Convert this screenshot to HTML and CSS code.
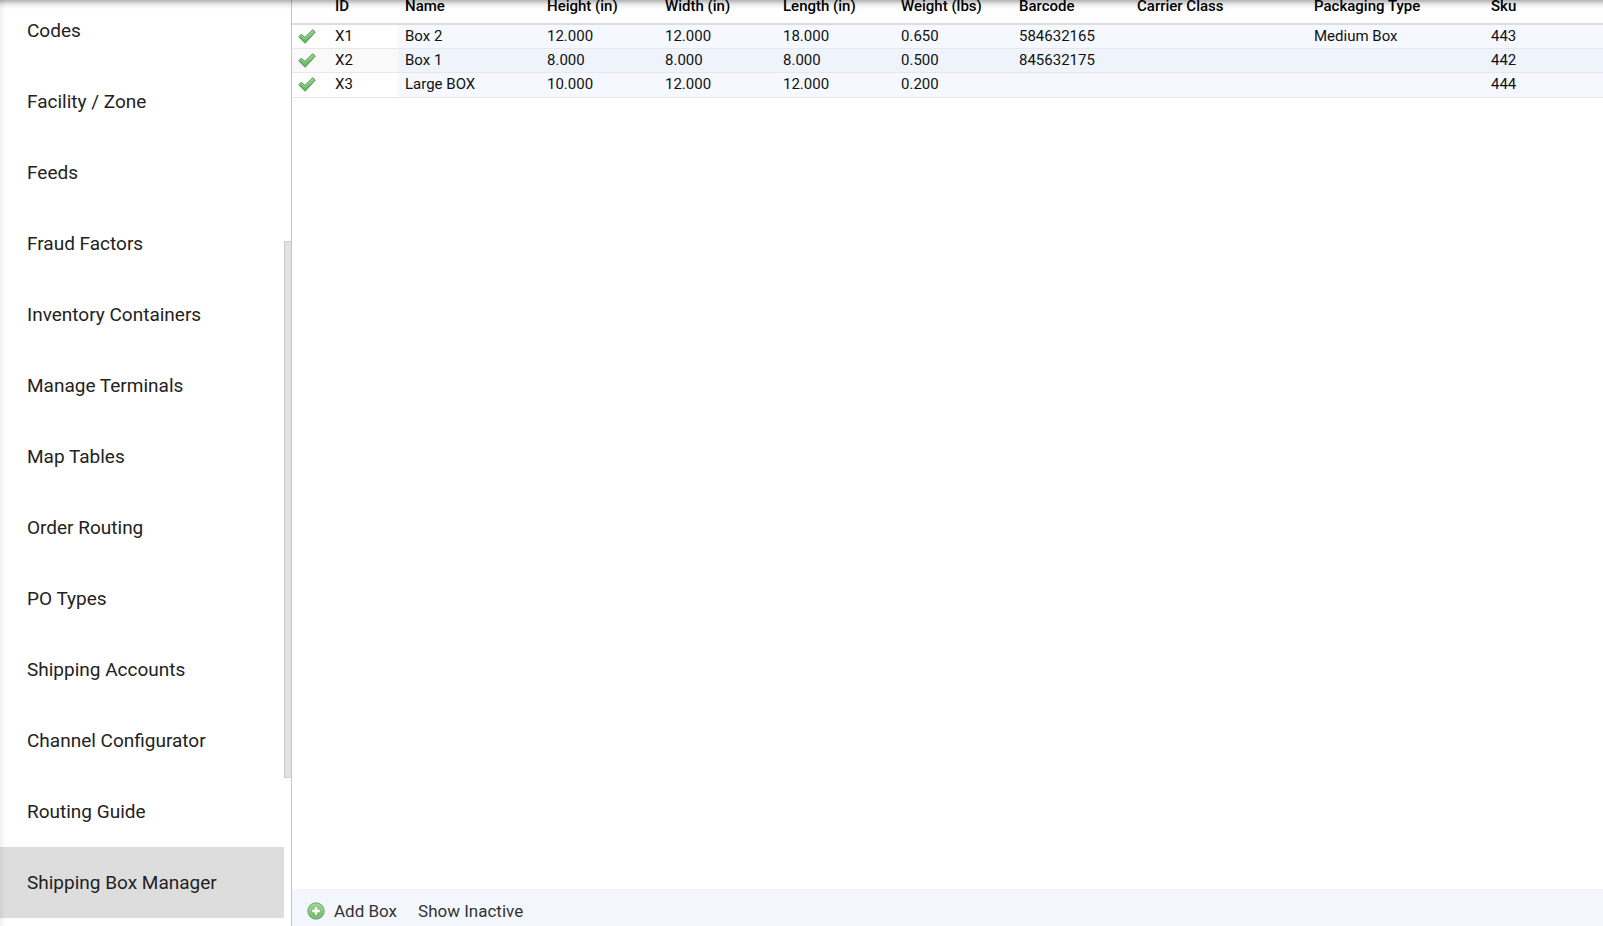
FILE: index.html
```
<!DOCTYPE html>
<html lang="en">

<head>
    <meta charset="UTF-8">
    <meta name="viewport" content="width=device-width, initial-scale=1.0">
    <title>Shipping Box Manager</title>
    <link rel="stylesheet" href="styles.css">
</head>

<body>
    <!-- icon shapes shared by the rows and the toolbar -->
    <svg class="icon-defs" aria-hidden="true">
        <defs>
            <linearGradient id="tickFill" x1="0" y1="0" x2="0" y2="1">
                <stop offset="0" stop-color="#8fd08a" />
                <stop offset="1" stop-color="#5fae5b" />
            </linearGradient>
            <linearGradient id="addFill" x1="0" y1="0" x2="0" y2="1">
                <stop offset="0" stop-color="#a3d39c" />
                <stop offset="1" stop-color="#5fae57" />
            </linearGradient>
            <symbol id="tick" viewBox="0 0 18 15">
                <path d="M.7 8 3.2 5.2 7 8.4 14.6.7l2.8 2.4L7.2 14.3z" fill="url(#tickFill)" stroke="#5c9a58" stroke-width="1" stroke-linejoin="round" />
                <path d="M2.2 7.8 3.4 6.6 7 9.8 14.8 2.2" fill="none" stroke="#a5dba0" stroke-width=".6" />
            </symbol>
        </defs>
    </svg>

    <div class="app">
        <aside class="sidebar">
            <nav class="menu">
                <a href="#">Codes</a>
                <a href="#">Facility / Zone</a>
                <a href="#">Feeds</a>
                <a href="#">Fraud Factors</a>
                <a href="#">Inventory Containers</a>
                <a href="#">Manage Terminals</a>
                <a href="#">Map Tables</a>
                <a href="#">Order Routing</a>
                <a href="#">PO Types</a>
                <a href="#">Shipping Accounts</a>
                <a href="#">Channel Configurator</a>
                <a href="#">Routing Guide</a>
                <a href="#" class="active">Shipping Box Manager</a>
            </nav>
            <div class="scroll-thumb"></div>
        </aside>

        <main class="content">
            <div class="table-container">
                <table>
                    <colgroup>
                        <col class="col-status">
                        <col class="col-id">
                        <col class="col-name">
                        <col class="col-size" span="5">
                        <col class="col-type" span="2">
                        <col>
                    </colgroup>
                    <thead>
                        <tr>
                            <th></th>
                            <th>ID</th>
                            <th>Name</th>
                            <th>Height (in)</th>
                            <th>Width (in)</th>
                            <th>Length (in)</th>
                            <th>Weight (lbs)</th>
                            <th>Barcode</th>
                            <th>Carrier Class</th>
                            <th>Packaging Type</th>
                            <th>Sku</th>
                        </tr>
                    </thead>
                    <tbody>
                        <tr>
                            <td class="status"><svg class="tick"><use href="#tick" /></svg></td>
                            <td>X1</td>
                            <td>Box 2</td>
                            <td>12.000</td>
                            <td>12.000</td>
                            <td>18.000</td>
                            <td>0.650</td>
                            <td>584632165</td>
                            <td></td>
                            <td>Medium Box</td>
                            <td>443</td>
                        </tr>
                        <tr>
                            <td class="status"><svg class="tick"><use href="#tick" /></svg></td>
                            <td>X2</td>
                            <td>Box 1</td>
                            <td>8.000</td>
                            <td>8.000</td>
                            <td>8.000</td>
                            <td>0.500</td>
                            <td>845632175</td>
                            <td></td>
                            <td></td>
                            <td>442</td>
                        </tr>
                        <tr>
                            <td class="status"><svg class="tick"><use href="#tick" /></svg></td>
                            <td>X3</td>
                            <td>Large BOX</td>
                            <td>10.000</td>
                            <td>12.000</td>
                            <td>12.000</td>
                            <td>0.200</td>
                            <td></td>
                            <td></td>
                            <td></td>
                            <td>444</td>
                        </tr>
                    </tbody>
                </table>
            </div>

            <footer class="toolbar">
                <button type="button">
                    <svg class="add-icon" viewBox="0 0 18 18" aria-hidden="true">
                        <circle cx="9" cy="9" r="8.2" fill="url(#addFill)" stroke="#6fae68" />
                        <circle cx="9" cy="9" r="6.2" fill="none" stroke="#a9d8a3" stroke-width=".8" />
                        <path d="M9 5.2v7.6M5.2 9h7.6" stroke="#fff" stroke-width="2.4" />
                    </svg>
                    Add Box
                </button>
                <button type="button">Show Inactive</button>
            </footer>
        </main>
        <div class="top-shadow"></div>
    </div>
</body>

</html>
```
FILE: styles.css
```
* {
    box-sizing: border-box;
}

body {
    margin: 0;
    font-family: Roboto, Arial, sans-serif;
    font-size: 15px;
    color: #111;
    background: #fff;
}

.icon-defs {
    position: absolute;
    width: 0;
    height: 0;
}

.app {
    position: relative;
    display: flex;
    height: 100vh;
    overflow: hidden;
}

.top-shadow {
    position: absolute;
    top: 0;
    left: 0;
    right: 0;
    height: 9px;
    background: linear-gradient(rgba(0, 0, 0, 0.3), rgba(0, 0, 0, 0.08) 50%, rgba(0, 0, 0, 0));
    pointer-events: none;
}

/* sidebar */
.sidebar {
    position: relative;
    flex: none;
    width: 292px;
    padding-right: 7px;
    border-right: 1px solid #c4c4c4;
}

.sidebar::before {
    content: '';
    position: absolute;
    top: 0;
    bottom: 0;
    left: 0;
    width: 6px;
    background: linear-gradient(to right, rgba(0, 0, 0, 0.06), rgba(0, 0, 0, 0));
    z-index: 1;
}

.menu {
    margin-top: -5px;
}

.menu a {
    display: flex;
    align-items: center;
    height: 71px;
    padding-left: 27px;
    font-size: 19px;
    color: #222;
    text-decoration: none;
}

.menu a.active {
    background: #ddd;
}

.scroll-thumb {
    position: absolute;
    top: 26%;
    right: 0;
    width: 7px;
    height: 58%;
    background: #e2e2e2;
    border: 1px solid #ccc;
    border-right: none;
}

/* box list */
.content {
    flex: 1;
    min-width: 0;
    display: flex;
    flex-direction: column;
}

.table-container {
    flex: 1;
    overflow: hidden;
}

table {
    width: 100%;
    table-layout: fixed;
    border-collapse: separate;
    border-spacing: 0;
}

.col-status {
    width: 36px;
}

.col-id {
    width: 70px;
}

.col-name {
    width: 142px;
}

.col-size {
    width: 118px;
}

.col-type {
    width: 177px;
}

th,
td {
    padding: 0 7px;
    text-align: left;
    white-space: nowrap;
}

th {
    height: 25px;
    line-height: 13px;
    vertical-align: top;
    font-weight: 500;
    color: #000;
    border-bottom: 2px solid #ddd;
}

td {
    height: 24px;
    line-height: 23px;
    vertical-align: top;
    background: #f5f9ff;
    border-bottom: 1px solid #e8e8e8;
}

td:nth-child(-n+2) {
    background: #fff;
}

tr:nth-child(even) td {
    background: #eff3fc;
}

tr:nth-child(even) td:nth-child(-n+2) {
    background: #f9f9f9;
}

tr:last-child td {
    height: 25px;
}

td.status {
    padding: 4px 6px 0;
}

.tick {
    display: block;
    width: 18px;
    height: 15px;
}

/* bottom bar */
.toolbar {
    display: flex;
    align-items: center;
    gap: 21px;
    height: 37px;
    padding: 6px 15px 0;
    background: #f3f7fd;
}

.toolbar button {
    display: flex;
    align-items: center;
    gap: 9px;
    padding: 0;
    border: none;
    background: none;
    font: inherit;
    font-size: 17px;
    color: #333;
    cursor: pointer;
}

.add-icon {
    width: 18px;
    height: 18px;
}
```
